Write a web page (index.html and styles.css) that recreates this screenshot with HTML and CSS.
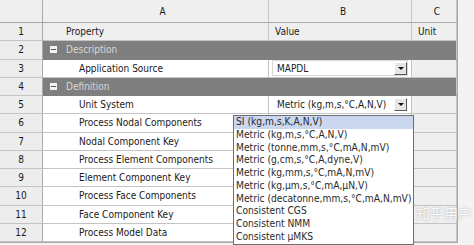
FILE: index.html
```html
<!DOCTYPE html>
<html lang="en">
<head>
  <meta charset="UTF-8">
  <title>Analysis Settings</title>
  <link rel="stylesheet" href="styles.css">
</head>
<body>
  <div class="sheet">
    <!-- 表格 -->
    <div class="grid">
      <div class="num head"></div>
      <div class="cell head center col-a">A</div>
      <div class="cell head center">B</div>
      <div class="cell head center">C</div>

      <div class="num">1</div>
      <div class="cell title pad1">Property</div>
      <div class="cell title">Value</div>
      <div class="cell title">Unit</div>

      <div class="num">2</div>
      <div class="cell section span3"><span class="minus"></span>Description</div>

      <div class="num">3</div>
      <div class="cell pad2">Application Source</div>
      <div class="cell"><div class="combo">MAPDL<span class="arrow"></span></div></div>
      <div class="cell unit"></div>

      <div class="num">4</div>
      <div class="cell section span3"><span class="minus"></span>Definition</div>

      <div class="num">5</div>
      <div class="cell pad2">Unit System</div>
      <div class="cell"><div class="combo flat">Metric (kg,m,s,°C,A,N,V)<span class="arrow"></span></div></div>
      <div class="cell unit"></div>

      <div class="num">6</div>
      <div class="cell pad2">Process Nodal Components</div>
      <div class="cell"></div>
      <div class="cell unit"></div>

      <div class="num">7</div>
      <div class="cell pad2">Nodal Component Key</div>
      <div class="cell"></div>
      <div class="cell unit"></div>

      <div class="num">8</div>
      <div class="cell pad2">Process Element Components</div>
      <div class="cell"></div>
      <div class="cell unit"></div>

      <div class="num">9</div>
      <div class="cell pad2">Element Component Key</div>
      <div class="cell"></div>
      <div class="cell unit"></div>

      <div class="num">10</div>
      <div class="cell pad2">Process Face Components</div>
      <div class="cell"></div>
      <div class="cell unit"></div>

      <div class="num">11</div>
      <div class="cell pad2">Face Component Key</div>
      <div class="cell"></div>
      <div class="cell unit"></div>

      <div class="num">12</div>
      <div class="cell pad2">Process Model Data</div>
      <div class="cell"></div>
      <div class="cell unit"></div>
    </div>

    <!-- 下拉列表 -->
    <ul class="dropdown">
      <li class="selected">SI (kg,m,s,K,A,N,V)</li>
      <li>Metric (kg,m,s,°C,A,N,V)</li>
      <li>Metric (tonne,mm,s,°C,mA,N,mV)</li>
      <li>Metric (g,cm,s,°C,A,dyne,V)</li>
      <li>Metric (kg,mm,s,°C,mA,N,mV)</li>
      <li>Metric (kg,μm,s,°C,mA,μN,V)</li>
      <li>Metric (decatonne,mm,s,°C,mA,N,mV)</li>
      <li>Consistent CGS</li>
      <li>Consistent NMM</li>
      <li>Consistent μMKS</li>
    </ul>

    <div class="watermark">知乎用户</div>
  </div>
</body>
</html>
```
FILE: styles.css
```css
/* 通用样式 */
body {
  margin: 0;
  padding: 0;
  background-color: #f3f3f3;
  font-family: 'DejaVu Sans Condensed', 'DejaVu Sans', 'Noto Sans CJK SC', sans-serif;
  font-size: 10px;
  color: #1a1a1a;
}

.sheet {
  position: relative;
  width: 474px;
  height: 245px;
  overflow: hidden;
}

.grid {
  display: grid;
  grid-template-columns: 43px 226px 143px 45px;
  grid-template-rows: 23px repeat(12, 18.25px);
  width: 457px;
  border-right: 1px solid #a8a8a8;
  border-bottom: 1px solid #a8a8a8;
  background-color: #fff;
}

.num,
.cell {
  display: flex;
  align-items: center;
  border-right: 1px solid #c4c4c4;
  border-bottom: 1px solid #c4c4c4;
  box-sizing: border-box;
  white-space: nowrap;
  overflow: hidden;
}

.num {
  justify-content: center;
  background-color: #ededed;
  border-right-color: #a9a9a9;
}

.head {
  background-color: #efefef;
  border-bottom-color: #a9a9a9;
}

.center {
  justify-content: center;
}

.cell {
  padding-left: 6px;
}

.head.col-a {
  padding-left: 14px;
}

.title {
  background-color: #efefef;
}

.pad1 {
  padding-left: 23px;
}

.pad2 {
  padding-left: 36px;
}

.unit {
  background-color: #efefef;
}

.section {
  background-color: #7f7f7f;
  color: #d8d8d8;
  border-bottom-color: #7f7f7f;
  padding-left: 7px;
}

.span3 {
  grid-column: span 3;
}

.minus {
  width: 7px;
  height: 7px;
  background-color: #f2f2f2;
  margin-right: 9px;
  position: relative;
}

.minus::after {
  content: "";
  position: absolute;
  left: 1px;
  right: 1px;
  top: 3px;
  height: 1px;
  background-color: #555;
}

/* 组合框 */
.combo {
  display: flex;
  align-items: center;
  width: 136px;
  height: 16px;
  margin-left: -3px;
  padding-left: 4px;
  box-sizing: border-box;
  background-color: #fff;
  border: 1px solid #d8d8d8;
  justify-content: space-between;
  font-size: 10px;
}

.combo.flat {
  border-color: transparent;
}

.arrow {
  width: 13px;
  height: 13px;
  box-sizing: border-box;
  background-color: #e6e6e6;
  border: 1px solid #fff;
  border-right-color: #555;
  border-bottom-color: #555;
  position: relative;
}

.arrow::after {
  content: "";
  position: absolute;
  left: 3px;
  top: 4px;
  border-left: 3px solid transparent;
  border-right: 3px solid transparent;
  border-top: 3px solid #111;
}

/* 下拉列表 */
.dropdown {
  position: absolute;
  left: 233px;
  top: 115px;
  width: 179px;
  margin: 0;
  padding: 0;
  list-style: none;
  background-color: #fff;
  border: 1px solid #6e6e6e;
  font-size: 10.2px;
  color: #2a2a2a;
}

.dropdown li {
  height: 12.75px;
  line-height: 12.75px;
  padding-left: 2px;
  white-space: nowrap;
}

.dropdown .selected {
  background-color: #cbd7ee;
}

.watermark {
  position: absolute;
  left: 416px;
  top: 203px;
  font-size: 14px;
  color: #fafafa;
  text-shadow: 0 0 2px #a8a8a8;
}
```
